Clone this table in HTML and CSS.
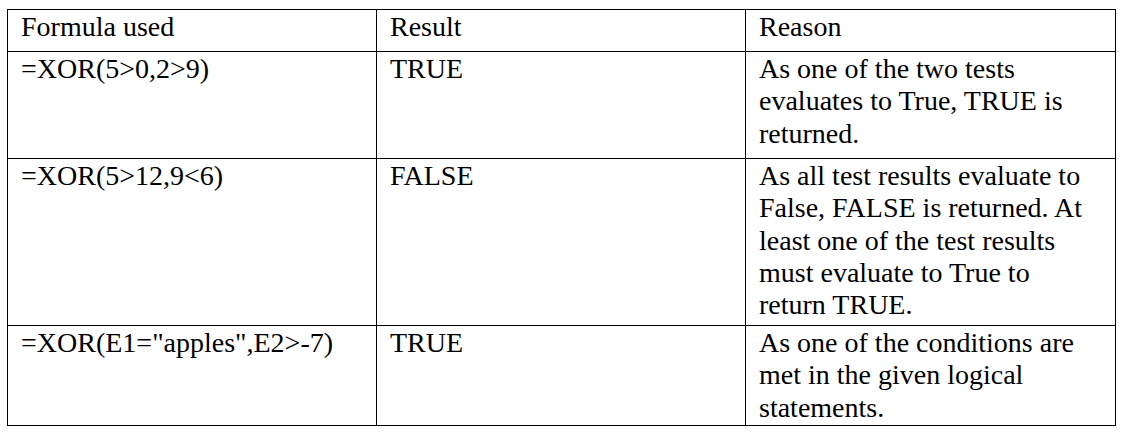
FILE: index.html
```html
<!DOCTYPE html>
<html lang="en">
<head>
<meta charset="utf-8">
<title>XOR examples</title>
<link rel="stylesheet" href="styles.css">
</head>
<body>
<div class="grid">
  <div class="cell">Formula used</div>
  <div class="cell">Result</div>
  <div class="cell">Reason</div>
  <div class="cell">=XOR(5&gt;0,2&gt;9)</div>
  <div class="cell">TRUE</div>
  <div class="cell">As one of the two tests evaluates to True, TRUE is returned.</div>
  <div class="cell">=XOR(5&gt;12,9&lt;6)</div>
  <div class="cell">FALSE</div>
  <div class="cell">As all test results evaluate to False, FALSE is returned. At least one of the test results must evaluate to True to return TRUE.</div>
  <div class="cell">=XOR(E1="apples",E2&gt;-7)</div>
  <div class="cell">TRUE</div>
  <div class="cell">As one of the conditions are met in the given logical statements.</div>
</div>
</body>
</html>
```

FILE: styles.css
```css
html, body {
  margin: 0;
  padding: 0;
  background: #ffffff;
}
body {
  padding: 9px 0 0 7px;
}
.grid {
  display: grid;
  grid-template-columns: 369px 369px 370px;
  grid-template-rows: 42px 107px 167px 100px;
  width: 1108px;
  border-top: 1px solid #000;
  border-left: 1px solid #000;
  color: #000;
}
.cell {
  font-family: "Liberation Serif", serif;
  font-size: 28px;
  line-height: 32.3px;
  border-right: 1px solid #000;
  border-bottom: 1px solid #000;
  padding: 1px 14px 0 13px;
  box-sizing: border-box;
}
```
